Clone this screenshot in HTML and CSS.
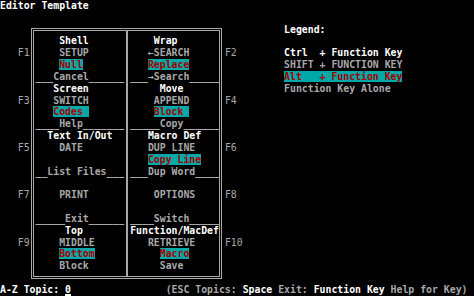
FILE: index.html
```html
<!DOCTYPE html>
<html>
<head>
<title>Editor Template</title>
<link rel="stylesheet" href="styles.css">
</head>
<body>
	<div class="screen">
		<div class="line hi">Editor Template</div>
		<div class="line"></div>
		<main class="template">
			<div class="fkeys left">
				<div class="fkey">F1</div>
				<div class="fkey">F3</div>
				<div class="fkey">F5</div>
				<div class="fkey">F7</div>
				<div class="fkey">F9</div>
			</div>
			<div class="box">
				<div class="col">
					<div class="line hi">    Shell</div>
					<div class="line">    SETUP</div>
					<div class="line">    <span class="hl">Null</span></div>
					<div class="line">___Cancel______</div>
					<div class="line hi">   Screen</div>
					<div class="line">   SWITCH</div>
					<div class="line">   <span class="hl">Codes </span></div>
					<div class="line">____Help_______</div>
					<div class="line hi">  Text In/Out</div>
					<div class="line">    DATE</div>
					<div class="line"></div>
					<div class="line">__List Files___</div>
					<div class="line"></div>
					<div class="line">    PRINT</div>
					<div class="line"></div>
					<div class="line">_____Exit______</div>
					<div class="line hi">     Top</div>
					<div class="line">    MIDDLE</div>
					<div class="line">    <span class="hl">Bottom</span></div>
					<div class="line">    Block</div>
				</div>
				<div class="divider"></div>
				<div class="col">
					<div class="line hi">    Wrap</div>
					<div class="line">   ←SEARCH</div>
					<div class="line">   <span class="hl">Replace</span></div>
					<div class="line">___→Search_____</div>
					<div class="line hi">     Move</div>
					<div class="line">    APPEND</div>
					<div class="line">    <span class="hl">Block </span></div>
					<div class="line">_____Copy______</div>
					<div class="line hi">   Macro Def</div>
					<div class="line">   DUP LINE</div>
					<div class="line">   <span class="hl">Copy Line</span></div>
					<div class="line">___Dup Word____</div>
					<div class="line"></div>
					<div class="line">    OPTIONS</div>
					<div class="line"></div>
					<div class="line">____Switch_____</div>
					<div class="line hi">Function/MacDef</div>
					<div class="line">   RETRIEVE</div>
					<div class="line">     <span class="hl">Macro</span></div>
					<div class="line">     Save</div>
				</div>
			</div>
			<div class="fkeys right">
				<div class="fkey">F2</div>
				<div class="fkey">F4</div>
				<div class="fkey">F6</div>
				<div class="fkey">F8</div>
				<div class="fkey">F10</div>
			</div>
			<div class="legend">
				<div class="line hi">Legend:</div>
				<div class="line"></div>
				<div class="line hi">Ctrl  + Function Key</div>
				<div class="line">SHIFT + FUNCTION KEY</div>
				<div class="line"><span class="hl">Alt   + Function Key</span></div>
				<div class="line">Function Key Alone</div>
			</div>
		</main>
		<div class="line"><span class="hi">A-Z Topic: </span><span class="cursor hi">0</span>                <span>(ESC Topics: </span><span class="hi">Space</span> Exit: <span class="hi">Function Key</span> Help for Key)</div>
	</div>
</body>
</html>
```

FILE: styles.css
```css
body {
	margin: 0;
	background-color: #000;
}
.screen {
	width: 474px;
	height: 296px;
	overflow: hidden;
	font-family: "DejaVu Sans Mono", "Liberation Mono", monospace;
	font-size: 9.84px;
	font-weight: bold;
	line-height: 11.84px;
	color: #a8a8a8;
}
.line {
	height: 11.84px;
	white-space: pre;
}
.hi {
	color: #fff;
}
.hl {
	background-color: #00a8a8;
	color: #a80000;
}
.cursor {
	display: inline-block;
	height: 11.84px;
	box-shadow: inset 0 -2px #fff;
}
.template {
	display: flex;
	height: 260.48px;
}
.fkeys {
	box-sizing: border-box;
	padding-top: 11.84px;
	font-weight: normal;
}
.fkeys.left {
	width: 31px;
	padding-left: 17.8px;
}
.fkeys.right {
	width: 61.9px;
	padding-left: 2.7px;
}
.fkey {
	box-sizing: border-box;
	height: 47.36px;
	padding-top: 11.84px;
}
.box {
	display: flex;
	align-self: flex-start;
	margin-top: 4.8px;
	padding: 4.04px 0.3px 4px 1.5px;
	border: 3px double #a8a8a8;
}
.col {
	width: 15ch;
}
.divider {
	width: 2px;
	margin: -4.04px 2px -4px 1.9px;
	background-color: #a8a8a8;
}
.legend {
	flex: 1;
}
```
